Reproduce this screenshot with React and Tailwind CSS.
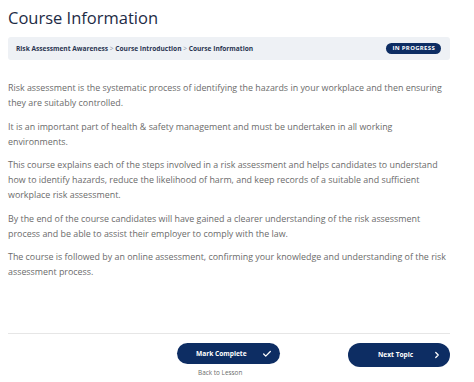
import { Check, ChevronRight } from 'lucide-react';

const paragraphs = [
  'Risk assessment is the systematic process of identifying the hazards in your workplace and then ensuring they are suitably controlled.',
  'It is an important part of health & safety management and must be undertaken in all working environments.',
  'This course explains each of the steps involved in a risk assessment and helps candidates to understand how to identify hazards, reduce the likelihood of harm, and keep records of a suitable and sufficient workplace risk assessment.',
  'By the end of the course candidates will have gained a clearer understanding of the risk assessment process and be able to assist their employer to comply with the law.',
  'The course is followed by an online assessment, confirming your knowledge and understanding of the risk assessment process.',
];

export default function App() {
  return (
    <div className="w-[474px] h-[382px] bg-white px-2 flex flex-col font-['Open_Sans',sans-serif]">
      {/* Title */}
      <h1 className="pt-[5px] text-[16.5px] leading-[26px] text-[#1d2b45]">Course Information</h1>

      {/* Breadcrumb */}
      <div className="mt-[6px] w-[442px] h-[23px] rounded-[3px] bg-[#eef1f5] flex items-center justify-between pl-2 pr-[9px]">
        <div className="text-[6.6px] font-bold text-[#2b3652]">
          Risk Assessment Awareness <span className="font-normal text-[#8a93a3]">&gt;</span> Course Introduction{' '}
          <span className="font-normal text-[#8a93a3]">&gt;</span> Course Information
        </div>
        <span className="h-[11px] px-[6px] rounded-full bg-[#0d2d63] text-white text-[6px] font-bold tracking-[0.3px] flex items-center">
          IN PROGRESS
        </span>
      </div>

      {/* Body */}
      <div className="flex-1 mt-[20px] w-[441px] text-[8.9px] leading-[15px] text-[#6b6b6b] space-y-[8.5px]">
        {paragraphs.map((p) => (
          <p key={p}>{p}</p>
        ))}
      </div>

      {/* Footer */}
      <div className="w-[442px] border-t border-[#e6e6e6] pt-[9px] pb-[4px] flex justify-end items-start gap-[68px]">
        <div className="flex flex-col">
          <button className="w-[103px] h-[21px] rounded-full bg-[#0d2d63] text-white text-[6.6px] font-bold flex items-center pl-[19px] pr-[8px]">
            <span className="flex-1 text-left">Mark Complete</span>
            <Check size={10} strokeWidth={3} />
          </button>
          <span className="mt-[4px] ml-[21px] text-[6.4px] leading-[10px] text-[#6b6b6b]">Back to Lesson</span>
        </div>
        <button className="w-[102px] h-[24px] rounded-full bg-[#0d2d63] text-white text-[6.6px] font-bold flex items-center pl-[30px] pr-[8px]">
          <span className="flex-1 text-left">Next Topic</span>
          <ChevronRight size={10} strokeWidth={3} />
        </button>
      </div>
    </div>
  );
}
